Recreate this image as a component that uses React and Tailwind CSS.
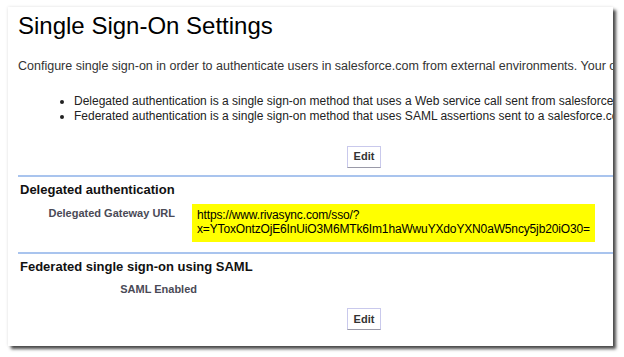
import React from "react";

const EditButton = () => (
  <div className="ml-[329px]">
    <button className="w-[34px] h-[22px] bg-white border border-[#c9c9ec] border-b-[#9a9aa8] text-[11px] font-bold text-[#333] leading-none">
      Edit
    </button>
  </div>
);

const SectionHeader = ({ children }) => (
  <div className="border-t-2 border-[#a9c4ee] pt-[5px] pl-[2px]">
    <h3 className="text-[13px] leading-[15px] font-bold text-[#111] whitespace-nowrap">
      {children}
    </h3>
  </div>
);

export default function App() {
  return (
    <div className="w-[624px] h-[357px] bg-white overflow-hidden font-['Liberation_Sans',Arial,sans-serif]">
      <div className="ml-[8px] mt-[7px] w-[605px] h-[339px] bg-white overflow-hidden shadow-[3px_3px_3px_rgba(0,0,0,0.7),0_0_3px_rgba(0,0,0,0.12)]">
        <div className="pl-[10px] w-[1200px]">
          <h1 className="mt-[6px] text-[24px] leading-[26px] text-black">
            Single Sign-On Settings
          </h1>
          <p className="mt-[20px] text-[12.5px] leading-[14px] text-[#333]">
            Configure single sign-on in order to authenticate users in
            salesforce.com from external environments. Your organization has
            the following options available for single sign-on:
          </p>
          <ul className="mt-[21px] ml-[44px] list-disc pl-[12px] text-[12px] leading-[15px] text-[#222] whitespace-nowrap">
            <li>
              Delegated authentication is a single sign-on method that uses a
              Web service call sent from salesforce.com to an endpoint.
            </li>
            <li>
              Federated authentication is a single sign-on method that uses
              SAML assertions sent to a salesforce.com endpoint.
            </li>
          </ul>
          <div className="mt-[19px]">
            <EditButton />
          </div>
          <div className="mt-[7px]">
            <SectionHeader>Delegated authentication</SectionHeader>
          </div>
          <div className="mt-[7px] flex items-start">
            <div className="w-[157px] pt-[3px] text-right text-[11px] leading-[13px] font-bold text-[#4a4a56]">
              Delegated Gateway URL
            </div>
            <div className="ml-[17px] w-[403px] bg-[#ffff00] pl-[5px] pt-[4px] pb-[6px] text-[12px] leading-[14px] tracking-[-0.15px] text-black">
              https://www.rivasync.com/sso/?
              <br />
              x=YToxOntzOjE6InUiO3M6MTk6Im1haWwuYXdoYXN0aW5ncy5jb20iO30=
            </div>
          </div>
          <div className="mt-[10px]">
            <SectionHeader>Federated single sign-on using SAML</SectionHeader>
          </div>
          <div className="mt-[9px] flex">
            <div className="w-[179px] text-right text-[11px] leading-[13px] font-bold text-[#4a4a56]">
              SAML Enabled
            </div>
          </div>
          <div className="mt-[10px]">
            <EditButton />
          </div>
        </div>
      </div>
    </div>
  );
}
